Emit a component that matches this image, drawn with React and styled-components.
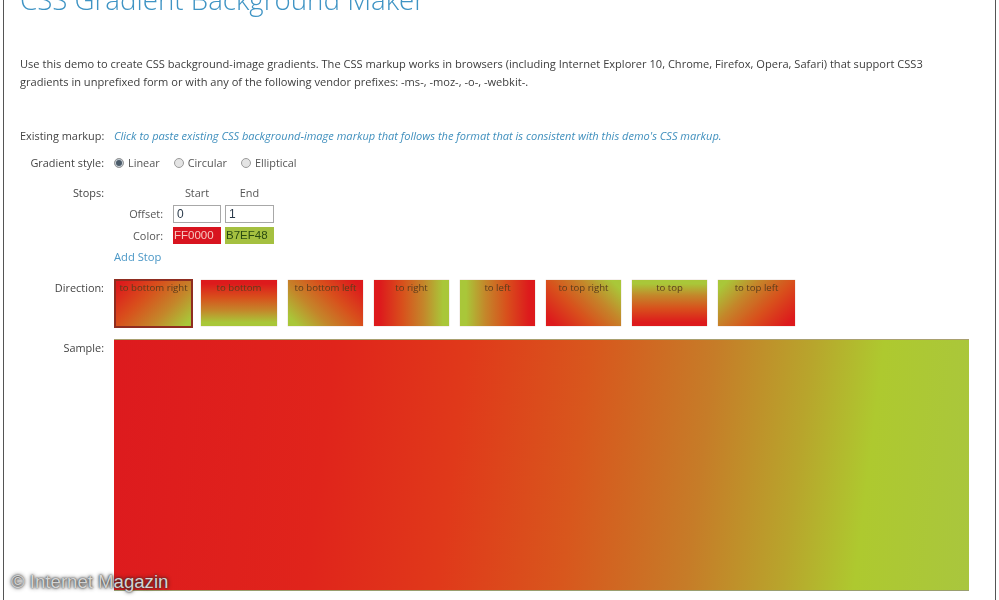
import React from "react";
import styled, { createGlobalStyle } from "styled-components";

const RED = "#dd1a1c";
const GREEN = "#a9c739";
const MID = "#d8501c";
const MID2 = "#c4862a";

const directions = [
  { label: "to bottom right", angle: "135deg", selected: true, width: 79 },
  { label: "to bottom", angle: "180deg", width: 76 },
  { label: "to bottom left", angle: "225deg", width: 75 },
  { label: "to right", angle: "90deg", width: 75 },
  { label: "to left", angle: "270deg", width: 75 },
  { label: "to top right", angle: "45deg", width: 75 },
  { label: "to top", angle: "0deg", width: 75 },
  { label: "to top left", angle: "315deg", width: 77 },
];

const GlobalStyle = createGlobalStyle`
  html, body {
    margin: 0;
    height: 600px;
    overflow: hidden;
    background: #fff;
  }
`;

const Page = styled.div`
  position: relative;
  width: 999px;
  height: 600px;
  overflow: hidden;
  font-family: "Open Sans", "Noto Sans", sans-serif;
  color: #3a3a3a;
`;

const Frame = styled.div`
  display: flow-root;
  box-sizing: border-box;
  width: 993px;
  height: 600px;
  margin-left: 3px;
  padding: 0 26px 0 16px;
  border-left: 1px solid #555;
  border-right: 1px solid #555;
  filter: blur(0.35px);
`;

const Title = styled.h1`
  margin: -18px 0 0;
  height: 73px;
  font-size: 27.7px;
  line-height: 34px;
  font-weight: 300;
  color: #3f94c4;
  white-space: nowrap;
`;

const Intro = styled.p`
  margin: 0 0 37px;
  font-size: 11.08px;
  line-height: 18px;
  color: #3c3c3c;
`;

const Form = styled.div`
  display: grid;
  grid-template-columns: 84px 1fr;
  column-gap: 10px;
  font-size: 10.9px;
  line-height: 16px;
`;

const Label = styled.div`
  margin-top: ${(p) => p.$top || 0}px;
  text-align: right;
  white-space: nowrap;
  color: #444;
`;

const Markup = styled.a`
  font-style: italic;
  font-size: 11.07px;
  color: #3f8fbd;
  white-space: nowrap;
`;

const Radios = styled.div`
  display: flex;
  align-items: center;
  gap: 14px;
  margin-top: 11px;
`;

const RadioLabel = styled.span`
  display: flex;
  align-items: center;
  gap: 4px;
  color: #555;
`;

const RadioDot = styled.span`
  box-sizing: border-box;
  width: 10px;
  height: 10px;
  border-radius: 50%;
  border: 1px solid #9a9a9a;
  background: ${(p) => (p.$on ? "#4a5a68" : "#e4e4e4")};
  box-shadow: ${(p) => (p.$on ? "inset 0 0 0 1px #cfd6dc" : "none")};
`;

const StopsCell = styled.div`
  margin-top: 15px;
`;

const StopsGrid = styled.div`
  display: grid;
  grid-template-columns: 60px 48px 49px;
  column-gap: 4px;
  row-gap: 4px;
  align-items: center;
  margin-left: -5px;
  width: fit-content;
`;

const StopLabel = styled(Label)`
  padding-right: 6px;
  color: #555;
`;

const Head = styled.div`
  text-align: center;
  color: #555;
  height: 15px;
  line-height: 14px;
`;

const OffsetInput = styled.input`
  box-sizing: border-box;
  width: 100%;
  height: 18px;
  padding: 0 3px;
  border: 1px solid #a8a8a8;
  background: #fff;
  font-family: "Liberation Sans", sans-serif;
  font-size: 12px;
  color: #2a3a4a;
  outline: none;
`;

const Swatch = styled.div`
  box-sizing: border-box;
  height: 17px;
  padding-left: 1px;
  line-height: 17px;
  font-family: "Liberation Sans", sans-serif;
  font-size: 11.5px;
  background: ${(p) => p.$bg};
  color: ${(p) => p.$fg};
`;

const AddStop = styled.a`
  display: block;
  margin-top: 5px;
  font-size: 11.2px;
  line-height: 16px;
  color: #4a97c6;
`;

const Thumbs = styled.div`
  display: flex;
  gap: 11px;
  margin-top: 14px;
`;

const Thumb = styled.div`
  box-sizing: border-box;
  flex: none;
  height: ${(p) => (p.$selected ? "49px" : "46px")};
  margin-top: ${(p) => (p.$selected ? "0" : "1px")};
  margin-right: ${(p) => (p.$selected ? "-3px" : "0")};
  padding-top: ${(p) => (p.$selected ? "0" : "1px")};
  font-size: 9.6px;
  font-weight: 500;
  line-height: 13px;
  text-align: center;
  white-space: nowrap;
  overflow: hidden;
  color: #5a3c1c;
  background: linear-gradient(${(p) => p.$angle}, ${RED} 8%, ${MID} 38%, ${MID2} 66%, ${GREEN} 92%) border-box;
  border: ${(p) => (p.$selected ? "2px solid #8f2d20" : "none")};
  box-shadow: ${(p) => (p.$selected ? "none" : "0 0 1px rgba(150,90,60,.5)")};
`;

const Sample = styled.div`
  box-sizing: border-box;
  height: 252px;
  margin-top: 11px;
  border-top: 1px solid #a9a070;
  border-bottom: 1px solid #9a9f70;
  background: linear-gradient(97deg, #dd1a1e 0%, #e0241b 25%, #e0391a 40%, #d8571d 54%, #c67c28 68%, #b8a52c 79%, #aec92f 87%, #a9c63e 100%);
`;

const Watermark = styled.div`
  position: absolute;
  left: 11px;
  top: 572px;
  font-family: "Liberation Sans", sans-serif;
  font-size: 18.6px;
  line-height: 20px;
  color: #d4d4d4;
  text-shadow: 0 0 4px #222, 0 0 2px #333;
  white-space: nowrap;
`;

const Radio = ({ on, children }) => (
  <RadioLabel>
    <RadioDot $on={on} />
    {children}
  </RadioLabel>
);

export default function App() {
  return (
    <Page>
      <GlobalStyle />
      <Frame>
        <Title>CSS Gradient Background Maker</Title>
        <Intro>
          Use this demo to create CSS background-image gradients. The CSS markup works in browsers (including Internet
          Explorer 10, Chrome, Firefox, Opera, Safari) that support CSS3
          <br />
          gradients in unprefixed form or with any of the following vendor prefixes: -ms-, -moz-, -o-, -webkit-.
        </Intro>
        <Form>
          <Label>Existing markup:</Label>
          <Markup>
            Click to paste existing CSS background-image markup that follows the format that is consistent with this
            demo's CSS markup.
          </Markup>

          <Label $top={11}>Gradient style:</Label>
          <Radios>
            <Radio on>Linear</Radio>
            <Radio>Circular</Radio>
            <Radio>Elliptical</Radio>
          </Radios>

          <Label $top={14}>Stops:</Label>
          <StopsCell>
            <StopsGrid>
              <div />
              <Head>Start</Head>
              <Head>End</Head>
              <StopLabel>Offset:</StopLabel>
              <OffsetInput readOnly value="0" />
              <OffsetInput readOnly value="1" />
              <StopLabel>Color:</StopLabel>
              <Swatch $bg="#d8141f" $fg="#f6c8c0">FF0000</Swatch>
              <Swatch $bg="#a5c040" $fg="#2a4a10">B7EF48</Swatch>
            </StopsGrid>
            <AddStop>Add Stop</AddStop>
          </StopsCell>

          <Label $top={15}>Direction:</Label>
          <Thumbs>
            {directions.map((d) => (
              <Thumb key={d.label} $angle={d.angle} $selected={d.selected} style={{ width: d.width }}>
                {d.label}
              </Thumb>
            ))}
          </Thumbs>

          <Label $top={12}>Sample:</Label>
          <Sample />
        </Form>
      </Frame>
      <Watermark>© Internet Magazin</Watermark>
    </Page>
  );
}
